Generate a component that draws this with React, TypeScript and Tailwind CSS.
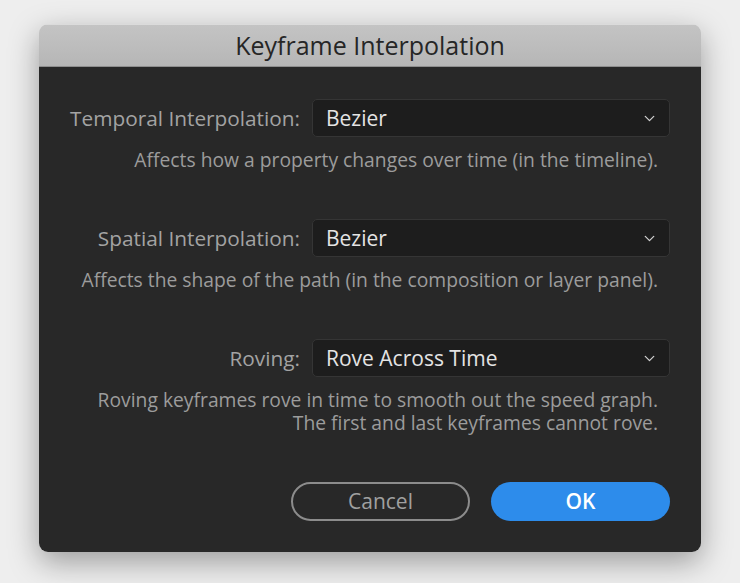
import { ChevronDown } from 'lucide-react';

interface FieldProps {
  label: string;
  value: string;
  help: string[];
}

function Field({ label, value, help }: FieldProps) {
  return (
    <div className="flex flex-col">
      <div className="flex items-center">
        <div className="w-[261px] text-right text-[20.8px] leading-[24px] text-[#a3a3a3]">{label}</div>
        <div className="ml-[12px] flex h-[38px] w-[358px] items-center justify-between rounded-[5px] border-[1.5px] border-[#353535] bg-[#1d1d1d] pl-[13px] pr-[11px]">
          <span className="text-[21px] leading-[24px] text-[#e4e4e4]">{value}</span>
          <ChevronDown className="h-[17px] w-[17px] text-[#d0d0d0]" strokeWidth={1.8} />
        </div>
      </div>
      <div className="mt-[11px] pr-[12px] text-right text-[19.3px] leading-[23px] text-[#9c9c9c]">
        {help.map((line) => (
          <div key={line}>{line}</div>
        ))}
      </div>
    </div>
  );
}

export default function App() {
  return (
    <div
      className="min-h-[583px] bg-[#eeeeee] pl-[39px] pt-[24px]"
      style={{ fontFamily: '"Open Sans", "Noto Sans", sans-serif' }}
    >
      <div className="flex h-[528px] w-[662px] flex-col overflow-hidden rounded-[9px] shadow-[0_10px_30px_rgba(0,0,0,0.35)]">
        <div className="flex h-[43px] items-center justify-center border-b border-[#8e8e8e] bg-gradient-to-b from-[#c4c4c4] to-[#b6b6b6] shadow-[inset_0_1px_0_rgba(255,255,255,0.4)]">
          <span className="text-[25px] leading-[28px] text-[#262626]">Keyframe Interpolation</span>
        </div>
        <div className="flex flex-1 flex-col bg-[#282828] pr-[31px] pt-[32px]">
          <Field
            label="Temporal Interpolation:"
            value="Bezier"
            help={['Affects how a property changes over time (in the timeline).']}
          />
          <div className="mt-[48px]">
            <Field
              label="Spatial Interpolation:"
              value="Bezier"
              help={['Affects the shape of the path (in the composition or layer panel).']}
            />
          </div>
          <div className="mt-[48px]">
            <Field
              label="Roving:"
              value="Rove Across Time"
              help={[
                'Roving keyframes rove in time to smooth out the speed graph.',
                'The first and last keyframes cannot rove.',
              ]}
            />
          </div>
          <div className="mt-[48px] flex justify-end gap-[21px]">
            <button className="h-[39px] w-[179px] rounded-full border-2 border-[#8c8c8c] text-[21px] text-[#a0a0a0]">
              Cancel
            </button>
            <button className="h-[39px] w-[179px] rounded-full bg-[#2d8ceb] text-[21px] font-semibold text-white">
              OK
            </button>
          </div>
        </div>
      </div>
    </div>
  );
}
